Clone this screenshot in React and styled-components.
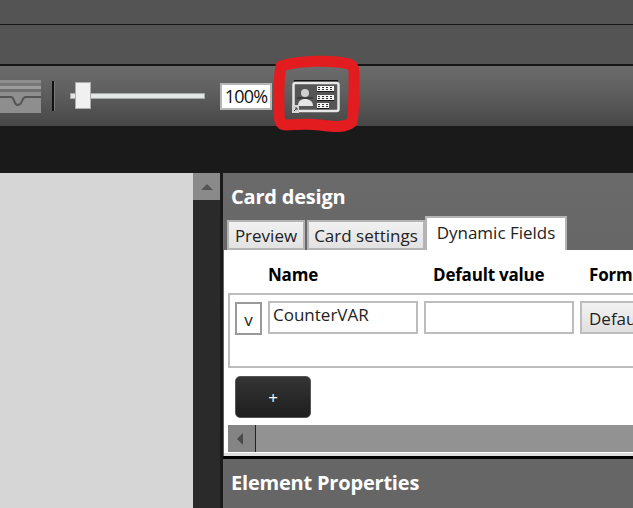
import React from 'react';
import styled, { createGlobalStyle } from 'styled-components';

const Global = createGlobalStyle`
  html, body { margin: 0; padding: 0; background: #1a1a1a; }
  body { font-family: "Open Sans", "Noto Sans", Arial, sans-serif; }
  * { box-sizing: border-box; }
`;

const Page = styled.div`
  position: relative;
  width: 633px;
  height: 508px;
  overflow: hidden;
  display: flex;
  flex-direction: column;
  background: #1a1a1a;
`;

const MenuBar = styled.div`
  height: ${(p) => p.$h}px;
  flex: none;
  background: #545454;
  border-bottom: ${(p) => p.$line}px solid #161616;
`;

const Toolbar = styled.div`
  height: 60px;
  flex: none;
  display: flex;
  align-items: center;
  background: linear-gradient(#6c6c6c 0%, #5e5e5e 45%, #474747 100%);
`;

const Thumbnail = styled.svg`
  width: 41px;
  height: 33px;
  flex: none;
  margin-right: 11px;
`;

const Separator = styled.div`
  width: 3px;
  height: 30px;
  flex: none;
  background: #111;
  border-right: 1px solid #777;
  margin-right: 15px;
`;

const Slider = styled.div`
  position: relative;
  width: 135px;
  height: 6px;
  flex: none;
  margin-right: 15px;
  background: #e4e8e4;
  border: 1px solid #a9a9a9;
`;

const SliderThumb = styled.div`
  position: absolute;
  left: 4px;
  top: -12px;
  width: 16px;
  height: 27px;
  background: #f0f0f0;
  border: 1px solid #adadad;
`;

const ZoomBox = styled.div`
  width: 52px;
  height: 27px;
  flex: none;
  margin-right: 20px;
  background: #fff;
  border: 2px solid #b5b5b5;
  color: #111;
  font-size: 18px;
  line-height: 23px;
  text-align: center;
  letter-spacing: -0.8px;
`;

const CardIcon = styled.svg`
  width: 48px;
  height: 33px;
  flex: none;
`;

const Strip = styled.div`
  height: 47px;
  flex: none;
  background: #1a1a1a;
`;

const Body = styled.div`
  flex: 1;
  min-height: 0;
  display: flex;
`;

const LeftPane = styled.div`
  width: 193px;
  flex: none;
  background: #d6d6d6;
`;

const VScroll = styled.div`
  width: 27px;
  flex: none;
  background: #2a2a2a;
`;

const VScrollButton = styled.div`
  height: 27px;
  background: #8a8a8a;
  display: flex;
  align-items: center;
  justify-content: center;
  &::before {
    content: '';
    border-left: 6px solid transparent;
    border-right: 6px solid transparent;
    border-bottom: 6px solid #555;
  }
`;

const RightColumn = styled.div`
  flex: 1;
  min-width: 0;
  margin-left: 3px;
  display: flex;
  flex-direction: column;
  background: #000;
`;

const CardPanel = styled.div`
  height: 283px;
  flex: none;
  background: linear-gradient(#6a6a6a, #5e5e5e);
  display: flex;
  flex-direction: column;
  overflow: hidden;
`;

const PanelTitle = styled.div`
  color: #fff;
  font-size: 20px;
  font-weight: 700;
  letter-spacing: -0.2px;
  padding-left: 8px;
  height: ${(p) => p.$h}px;
  line-height: ${(p) => p.$lh}px;
  flex: none;
`;

const Tabs = styled.div`
  display: flex;
  align-items: flex-end;
  height: 34px;
  padding-left: 4px;
  gap: 2px;
  flex: none;
`;

const Tab = styled.div`
  height: ${(p) => (p.$active ? 34 : 30)}px;
  width: ${(p) => p.$w}px;
  margin-left: ${(p) => (p.$active ? -2 : 0)}px;
  flex: none;
  background: ${(p) => (p.$active ? '#fff' : 'linear-gradient(#f1f1f1, #e2e2e2)')};
  border: 2px solid #b4b4b4;
  border-bottom: ${(p) => (p.$active ? 'none' : '2px solid #b4b4b4')};
  color: #222;
  font-size: 17px;
  line-height: ${(p) => (p.$active ? 30 : 27)}px;
  text-align: center;
  white-space: nowrap;
`;

const TabBody = styled.div`
  flex: 1;
  min-height: 0;
  margin-left: 1px;
  background: #fff;
  border-bottom: 3px solid #ddd;
  padding: 0 0 3px 4px;
  display: flex;
  flex-direction: column;
`;

const HeaderRow = styled.div`
  display: flex;
  height: 43px;
  flex: none;
  padding-top: 13px;
  font-size: 17px;
  font-weight: 700;
  color: #000;
  letter-spacing: -0.2px;
  line-height: 23px;
  white-space: nowrap;
`;

const HeaderCell = styled.div`
  width: ${(p) => p.$w}px;
  flex: none;
`;

const FieldRows = styled.div`
  height: 75px;
  flex: none;
  border: 2px solid #bdbdbd;
  border-right: none;
  padding: 6px 0 0 5px;
  display: flex;
  align-items: flex-start;
  gap: 6px;
`;

const ExpandBox = styled.div`
  width: 27px;
  height: 33px;
  margin-top: 1px;
  flex: none;
  border: 2px solid #9a9a9a;
  color: #222;
  font-size: 17px;
  line-height: 31px;
  text-align: center;
`;

const TextBox = styled.div`
  width: 150px;
  height: 33px;
  flex: none;
  border: 2px solid #bdbdbd;
  padding-left: 3px;
  color: #222;
  font-size: 17px;
  line-height: 24px;
`;

const FormatButton = styled.div`
  width: 70px;
  height: 33px;
  flex: none;
  background: linear-gradient(#f2f2f2, #e0e0e0);
  border: 2px solid #bdbdbd;
  padding-left: 7px;
  color: #222;
  font-size: 17px;
  line-height: 32px;
  white-space: nowrap;
`;

const AddButton = styled.div`
  width: 76px;
  height: 42px;
  flex: none;
  margin: 8px 0 7px 7px;
  border-radius: 5px;
  border: 1px solid #555;
  background: linear-gradient(#343434, #1f1f1f);
  color: #fff;
  font-size: 17px;
  line-height: 42px;
  text-align: center;
`;

const HScroll = styled.div`
  height: 27px;
  flex: none;
  background: #929292;
  display: flex;
`;

const HScrollButton = styled.div`
  width: 28px;
  background: #848484;
  border-right: 1px solid #222;
  display: flex;
  align-items: center;
  justify-content: center;
  &::before {
    content: '';
    border-top: 6px solid transparent;
    border-bottom: 6px solid transparent;
    border-right: 6px solid #4a4a4a;
    margin-right: 4px;
  }
`;

const PropertiesPanel = styled.div`
  flex: 1;
  margin-top: 3px;
  background: #666;
`;

const Marker = styled.svg`
  position: absolute;
  left: 0;
  top: 0;
  pointer-events: none;
`;

// dashes stand in for the tiny unreadable text lines on the card
const CardLines = ({ y, w }) => (
  <g>
    <rect x="25" y={y} width={w} height="5" fill="#f4f4f4" />
    <path d={`M26 ${y + 1.5}H${24 + w}M26 ${y + 3.5}H${24 + w}`} stroke="#333" strokeWidth="1" strokeDasharray="2 2" />
    <path d={`M25 ${y + 5.5}H${25 + w}`} stroke="#1c1c1c" strokeWidth="1" />
  </g>
);

export default function App() {
  return (
    <Page>
      <Global />
      <MenuBar $h={25} $line={1} />
      <MenuBar $h={41} $line={2} />
      <Toolbar>
        <Thumbnail viewBox="0 0 41 33">
          <rect width="41" height="33" fill="#8e8e8e" />
          <rect y="3" width="41" height="3" fill="#777" />
          <rect y="6" width="41" height="3" fill="#9b9b9b" />
          <rect y="9" width="41" height="3" fill="#6e6e6e" />
          <path d="M0 17H11C15 17 13 25 18 25C23 25 21 17 26 17H41" fill="none" stroke="#555" strokeWidth="2" />
        </Thumbnail>
        <Separator />
        <Slider>
          <SliderThumb />
        </Slider>
        <ZoomBox>100%</ZoomBox>
        <CardIcon viewBox="0 0 48 33">
          <rect x="2" y="0" width="44" height="1.5" fill="#111" />
          <rect x="1.5" y="3" width="45" height="28" rx="2" fill="#555" stroke="#e6e6e6" strokeWidth="2.5" />
          <circle cx="13" cy="13" r="4" fill="#cfcfcf" />
          <path d="M5 18H21" stroke="#222" strokeWidth="1" />
          <path d="M6 26C6 21 9 19 13 19C17 19 21 21 21 26Z" fill="#e4e4e4" />
          <CardLines y={6} w={17} />
          <CardLines y={15} w={17} />
          <CardLines y={23} w={12} />
          <rect x="0" y="25" width="7" height="8" fill="#d4d4d4" />
          <path d="M2 31L5 28M3 28H5V30" fill="none" stroke="#444" strokeWidth="1" />
        </CardIcon>
      </Toolbar>
      <Strip />
      <Body>
        <LeftPane />
        <VScroll>
          <VScrollButton />
        </VScroll>
        <RightColumn>
          <CardPanel>
            <PanelTitle $h={43} $lh={48}>Card design</PanelTitle>
            <Tabs>
              <Tab $w={78}>Preview</Tab>
              <Tab $w={118}>Card settings</Tab>
              <Tab $w={142} $active>Dynamic Fields</Tab>
            </Tabs>
            <TabBody>
              <HeaderRow>
                <HeaderCell $w={40} />
                <HeaderCell $w={165}>Name</HeaderCell>
                <HeaderCell $w={156}>Default value</HeaderCell>
                <HeaderCell $w={60}>Format</HeaderCell>
              </HeaderRow>
              <FieldRows>
                <ExpandBox>v</ExpandBox>
                <TextBox>CounterVAR</TextBox>
                <TextBox />
                <FormatButton>Default</FormatButton>
              </FieldRows>
              <AddButton>+</AddButton>
              <HScroll>
                <HScrollButton />
              </HScroll>
            </TabBody>
          </CardPanel>
          <PropertiesPanel>
            <PanelTitle $h={46} $lh={48}>Element Properties</PanelTitle>
          </PropertiesPanel>
        </RightColumn>
      </Body>
      <Marker width="633" height="508" viewBox="0 0 633 508">
        <path d="M281 66C300 60 335 60 349 64C355 66 354 72 354 80C354 95 354 110 352 122C345 128 335 127 320 125C305 123 295 125 286 125C279 125 279 118 279 110C279 95 278 80 281 66Z" fill="none" stroke="#e31c1f" strokeWidth="11" strokeLinejoin="round" />
      </Marker>
    </Page>
  );
}
